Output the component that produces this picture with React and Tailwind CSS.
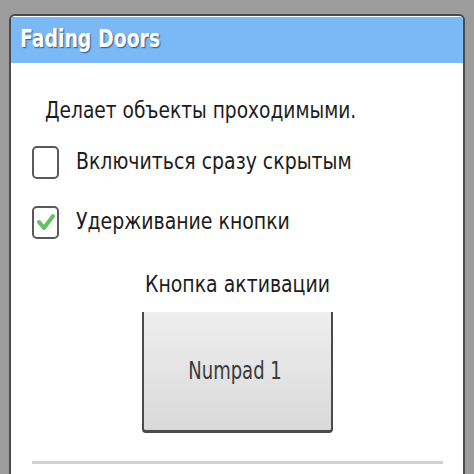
import React, { useState } from "react";

// Inline-block so the glyphs can be stretched a little taller
const Tall = ({ children, className = "" }) => (
  <span className={`inline-block ${className}`}>{children}</span>
);

// Small square checkbox with a green tick when on
function Check({ checked, label, onToggle }) {
  return (
    <label className="flex items-center gap-[17px] cursor-pointer" onClick={onToggle}>
      <span className="w-[27px] h-[33px] rounded-[5px] border-[2px] border-[#595959] bg-white flex items-center justify-center">
        {checked && (
          <svg width="20" height="20" viewBox="0 0 20 20">
            <path
              d="M3 10 L8 16 L17 4"
              fill="none"
              stroke="#66bf66"
              strokeWidth="4"
              strokeLinecap="round"
              strokeLinejoin="round"
            />
          </svg>
        )}
      </span>
      <Tall className="scale-y-[1.1] text-[21px] text-[#1c1c1c]">{label}</Tall>
    </label>
  );
}

export default function App() {
  const [hidden, setHidden] = useState(false);
  const [hold, setHold] = useState(true);

  return (
    <div
      className="w-[474px] h-[474px] bg-[#9c9c9c] pt-[14px] pl-[9px] pr-[9px] overflow-hidden"
      style={{ fontFamily: '"DejaVu Sans Condensed", "Liberation Sans", sans-serif' }}
    >
      <div className="h-full border-l-[2px] border-r-[2px] border-t-[2px] border-[#4a4a4a] rounded-t-[6px] bg-white overflow-hidden">
        {/* window title */}
        <div className="h-[46px] mt-[1px] bg-[#7ab8f6] flex items-center pl-[9px]">
          <Tall className="scale-y-[1.2] text-[21px] font-bold text-white [text-shadow:1px_1px_1px_#3a5a80]">
            Fading Doors
          </Tall>
        </div>

        <div className="pl-[21px] pr-[20px]">
          <p className="pt-[37px] pl-[13px] text-[20.7px] text-[#1c1c1c] leading-none">
            <Tall className="scale-y-[1.1]">Делает объекты проходимыми.</Tall>
          </p>

          <div className="mt-[25px] flex flex-col gap-[27px]">
            <Check checked={hidden} label="Включиться сразу скрытым" onToggle={() => setHidden(!hidden)} />
            <Check checked={hold} label="Удерживание кнопки" onToggle={() => setHold(!hold)} />
          </div>

          <p className="mt-[35px] text-center text-[21px] text-[#1c1c1c] leading-none">
            <Tall className="scale-y-[1.1]">Кнопка активации</Tall>
          </p>

          <div className="mt-[17px] flex justify-center">
            <button className="w-[191px] h-[121px] rounded-b-[4px] border-x-[2px] border-b-[3px] border-[#4a4a4a] bg-gradient-to-b from-[#efefef] to-[#d9d9d9] text-[20px] text-[#3a3a3a] pr-[5px]">
              <Tall className="scale-y-[1.2]">Numpad 1</Tall>
            </button>
          </div>

          <div className="mt-[28px] h-[3px] bg-[#d0d0d0]" />
        </div>
      </div>
    </div>
  );
}
